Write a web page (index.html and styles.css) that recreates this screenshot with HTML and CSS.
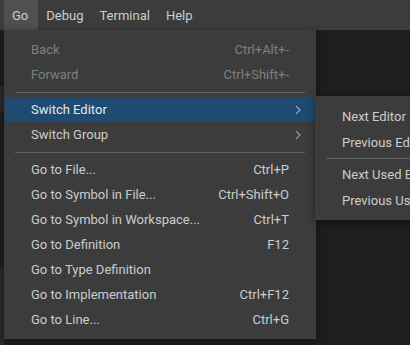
FILE: index.html
```html
<!DOCTYPE html>
<html lang="en">
<head>
    <meta charset="UTF-8">
    <title>Go Menu</title>
    <link rel="stylesheet" href="styles.css">
</head>
<body>
    <div class="menubar">
        <div class="menubar-item active">Go</div>
        <div class="menubar-item">Debug</div>
        <div class="menubar-item">Terminal</div>
        <div class="menubar-item">Help</div>
    </div>

    <div class="workbench">
        <div class="sidebar">
            <div class="side-row"></div>
            <div class="side-row band"></div>
            <div class="side-row"></div>
            <div class="side-row"></div>
            <div class="side-row"></div>
            <div class="side-row"></div>
            <div class="side-row"></div>
            <div class="side-row"></div>
            <div class="side-row band"></div>
            <div class="side-row band"></div>
            <div class="side-row band"></div>
        </div>
        <div class="editor"></div>

        <div class="menu main-menu">
            <div class="menu-item disabled"><span class="label">Back</span><span class="key">Ctrl+Alt+-</span><span class="arrow"></span></div>
            <div class="menu-item disabled"><span class="label">Forward</span><span class="key">Ctrl+Shift+-</span><span class="arrow"></span></div>
            <div class="separator"></div>
            <div class="menu-item selected"><span class="label">Switch Editor</span><span class="key"></span><span class="arrow"><svg width="6" height="10" viewBox="0 0 6 10"><path d="M0.8 0.8 L5 5 L0.8 9.2" fill="none" stroke="currentColor" stroke-width="1.1"/></svg></span></div>
            <div class="menu-item"><span class="label">Switch Group</span><span class="key"></span><span class="arrow"><svg width="6" height="10" viewBox="0 0 6 10"><path d="M0.8 0.8 L5 5 L0.8 9.2" fill="none" stroke="currentColor" stroke-width="1.1"/></svg></span></div>
            <div class="separator"></div>
            <div class="menu-item"><span class="label">Go to File...</span><span class="key">Ctrl+P</span><span class="arrow"></span></div>
            <div class="menu-item"><span class="label">Go to Symbol in File...</span><span class="key">Ctrl+Shift+O</span><span class="arrow"></span></div>
            <div class="menu-item"><span class="label">Go to Symbol in Workspace...</span><span class="key">Ctrl+T</span><span class="arrow"></span></div>
            <div class="menu-item"><span class="label">Go to Definition</span><span class="key">F12</span><span class="arrow"></span></div>
            <div class="menu-item"><span class="label">Go to Type Definition</span><span class="key"></span><span class="arrow"></span></div>
            <div class="menu-item"><span class="label">Go to Implementation</span><span class="key">Ctrl+F12</span><span class="arrow"></span></div>
            <div class="menu-item"><span class="label">Go to Line...</span><span class="key">Ctrl+G</span><span class="arrow"></span></div>
        </div>

        <div class="menu sub-menu">
            <div class="menu-item"><span class="label">Next Editor</span></div>
            <div class="menu-item"><span class="label">Previous Editor</span></div>
            <div class="separator"></div>
            <div class="menu-item"><span class="label">Next Used Editor</span></div>
            <div class="menu-item"><span class="label">Previous Used Editor</span></div>
        </div>
    </div>
</body>
</html>
```

FILE: styles.css
```css
body {
    margin: 0;
    background-color: #1e1e1e;
    font-family: Roboto, "Noto Sans", sans-serif;
    font-size: 13px;
    color: #cccccc;
    overflow: hidden;
}
.menubar {
    display: flex;
    height: 30px;
    padding-left: 4px;
    background-color: #3c3c3c;
}
.menubar-item {
    padding: 0 8px;
    line-height: 31px;
    color: #cccccc;
}
.menubar-item.active {
    padding-right: 10px;
    background-color: #505050;
}
.workbench {
    position: relative;
    display: flex;
    height: 315px;
}
.sidebar {
    width: 4px;
    background-color: #1e1e1e;
    padding-top: 30px;
}
.side-row {
    height: 26px;
}
.side-row.band {
    background-color: #2a2a2a;
}
.editor {
    flex: 1;
    background-color: #1e1e1e;
}
.menu {
    position: absolute;
    background-color: #3c3c3c;
    box-shadow: 0 2px 8px rgba(0, 0, 0, 0.45);
}
.main-menu {
    left: 4px;
    top: 0;
    width: 310px;
    padding: 7px 1px 7px;
}
.sub-menu {
    left: 315px;
    top: 66px;
    width: 140px;
    padding: 7px 0 7px;
}
.menu-item {
    display: flex;
    align-items: center;
    height: 25px;
    padding-left: 26px;
    white-space: nowrap;
}
.sub-menu .menu-item {
    height: 26px;
    padding-left: 27px;
}
.menu-item .label {
    flex: 1;
}
.menu-item .arrow {
    width: 26px;
    padding-left: 6px;
    box-sizing: border-box;
    display: flex;
    align-items: center;
    color: #a0a0a0;
}
.menu-item.disabled {
    color: #7f7f7f;
}
.menu-item.selected {
    background-color: #1f4a71;
    color: #e8e8e8;
}
.menu-item.selected .arrow {
    color: #8fb4d8;
}
.separator {
    height: 1px;
    margin: 5px 10px 4px;
    background-color: #5f5f5f;
}
.sub-menu .separator {
    margin: 3px 0 2px 11px;
}
```
